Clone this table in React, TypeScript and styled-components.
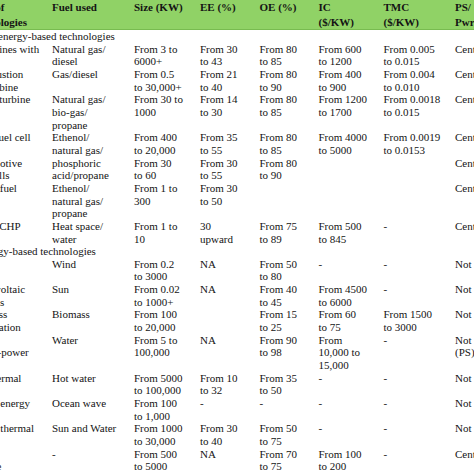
import React from "react";
import styled, { createGlobalStyle } from "styled-components";

const GlobalStyle = createGlobalStyle`
  html,
  body {
    margin: 0;
    padding: 0;
    background: #ffffff;
  }
  body {
    font-family: "Liberation Serif", "Times New Roman", serif;
  }
`;

const Frame = styled.div`
  width: 474px;
  height: 474px;
  overflow: hidden;
  background: #ffffff;
`;

const Table = styled.table`
  width: 617.5px;
  margin-left: -76.5px;
  table-layout: fixed;
  border-collapse: collapse;
  color: #141414;
  font-size: 11px;
`;

const Col = styled.col<{ $w: number }>`
  width: ${({ $w }) => $w}px;
`;

const HeadRow = styled.tr`
  background: #90d266;
  border-bottom: 1px solid #78bb50;
`;

const HeadCell = styled.th`
  padding: 0 4px;
  text-align: left;
  vertical-align: top;
  font-weight: bold;
  line-height: 14.5px;
  white-space: pre;
`;

const SectionCell = styled.td`
  padding: 0 4px;
  line-height: 12.65px;
  white-space: nowrap;
`;

const Cell = styled.td`
  padding: 0 4px;
  vertical-align: top;
  line-height: 12.65px;
  white-space: pre;
`;

type DataRow = { kind: "row"; cells: string[] };
type SectionRow = { kind: "section"; label: string };

const WIDTHS = [42, 82.5, 82, 66, 59.5, 59, 65, 71.5, 90];

const HEADINGS = [
  "",
  "Type of\ntechnologies",
  "Fuel used",
  "Size (KW)",
  "EE (%)",
  "OE (%)",
  "IC\n($/KW)",
  "TMC\n($/KW)",
  "PS/\nPwr",
];

const row = (...cells: string[]): DataRow => ({ kind: "row", cells: ["", ...cells] });
const section = (label: string): SectionRow => ({ kind: "section", label });

const ROWS: (DataRow | SectionRow)[] = [
  section("Non-renewable energy-based technologies"),
  row("IC engines with\nCHP", "Natural gas/\ndiesel", "From 3 to\n6000+", "From 30\nto 43", "From 80\nto 85", "From 600\nto 1200", "From 0.005\nto 0.015", "Central"),
  row("Combustion\ngas turbine", "Gas/diesel", "From 0.5\nto 30,000+", "From 21\nto 40", "From 80\nto 90", "From 400\nto 900", "From 0.004\nto 0.010", "Central"),
  row("Micro turbine", "Natural gas/\nbio-gas/\npropane", "From 30 to\n1000", "From 14\nto 30", "From 80\nto 85", "From 1200\nto 1700", "From 0.0018\nto 0.015", "Central"),
  row("PEM fuel cell", "Ethenol/\nnatural gas/", "From 400\nto 20,000", "From 35\nto 55", "From 80\nto 85", "From 4000\nto 5000", "From 0.0019\nto 0.0153", "Central"),
  row("Automotive\nfuel cells", "phosphoric\nacid/propane", "From 30\nto 60", "From 30\nto 55", "From 80\nto 90", "", "", "Central"),
  row("Direct fuel\ncell", "Ethenol/\nnatural gas/\npropane", "From 1 to\n300", "From 30\nto 50", "", "", "", "Central"),
  row("Micro CHP", "Heat space/\nwater", "From 1 to\n10", "30\nupward", "From 75\nto 89", "From 500\nto 845", "-", "Central"),
  section("Renewable energy-based technologies"),
  row("Wind", "Wind", "From 0.2\nto 3000", "NA", "From 50\nto 80", "-", "-", "Not required"),
  row("Photovoltaic\nsystems", "Sun", "From 0.02\nto 1000+", "NA", "From 40\nto 45", "From 4500\nto 6000", "-", "Not required"),
  row("Biomass\ngasification", "Biomass", "From 100\nto 20,000", "", "From 15\nto 25", "From 60\nto 75", "From 1500\nto 3000", "Not required"),
  row("Small\nHydro-power", "Water", "From 5 to\n100,000", "NA", "From 90\nto 98", "From\n10,000 to\n15,000", "-", "Not required\n(PS)"),
  row("Geothermal", "Hot water", "From 5000\nto 100,000", "From 10\nto 32", "From 35\nto 50", "-", "-", "Not required"),
  row("Ocean energy", "Ocean wave", "From 100\nto 1,000", "-", "-", "-", "-", "Not required"),
  row("Ocean thermal", "Sun and Water", "From 1000\nto 30,000", "From 30\nto 40", "From 50\nto 75", "-", "-", "Not required"),
  row("Power\nstorage", "-", "From 500\nto 5000", "NA", "From 70\nto 75", "From 100\nto 200", "-", "Central"),
];

export default function App() {
  return (
    <Frame>
      <GlobalStyle />
      <Table>
        <colgroup>
          {WIDTHS.map((w, i) => (
            <Col key={i} $w={w} />
          ))}
        </colgroup>
        <thead>
          <HeadRow>
            {HEADINGS.map((h, i) => (
              <HeadCell key={i}>{h}</HeadCell>
            ))}
          </HeadRow>
        </thead>
        <tbody>
          {ROWS.map((r, i) =>
            r.kind === "section" ? (
              <tr key={i}>
                <SectionCell colSpan={WIDTHS.length}>{r.label}</SectionCell>
              </tr>
            ) : (
              <tr key={i}>
                {r.cells.map((c, j) => (
                  <Cell key={j}>{c}</Cell>
                ))}
              </tr>
            )
          )}
        </tbody>
      </Table>
    </Frame>
  );
}
